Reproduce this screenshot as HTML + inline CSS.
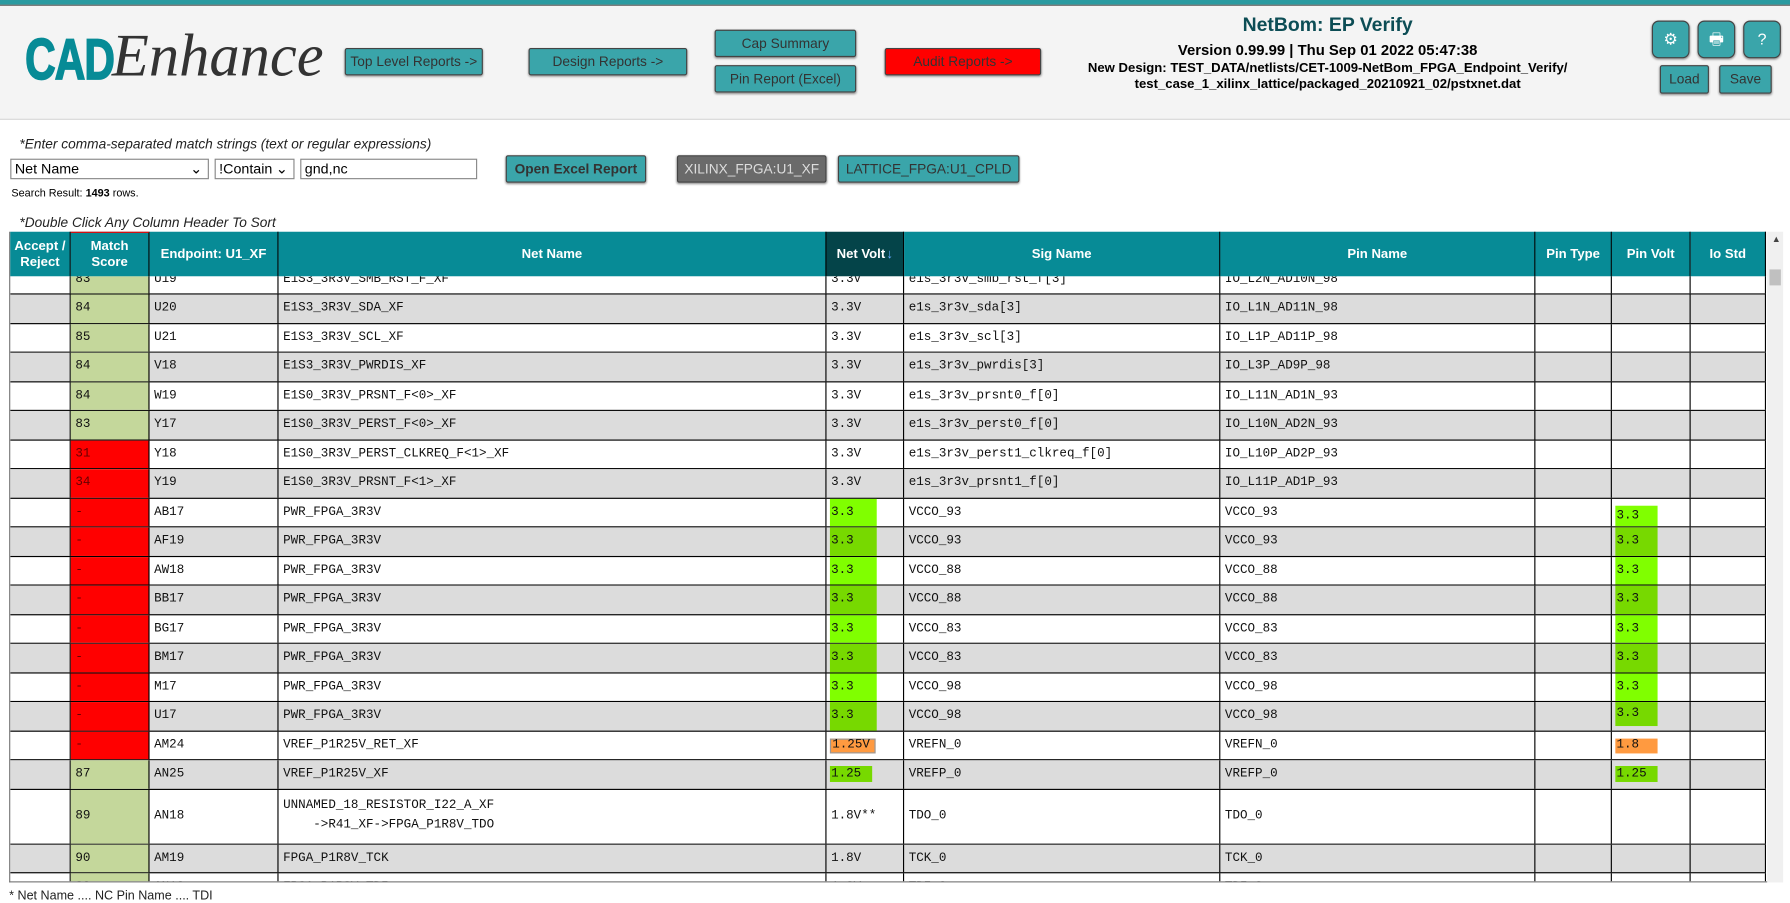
<!DOCTYPE html>
<html><head><meta charset="utf-8"><style>
html,body{margin:0;padding:0;width:1790px;height:893px;overflow:hidden;background:#fff}
#w{position:absolute;left:0;top:0;width:1568px;height:782px;transform:scale(1.14158);transform-origin:0 0;font-family:"Liberation Sans",sans-serif}
.a{position:absolute}
.hdr{left:0;top:0;width:1568px;height:100px;background:#f4f4f4;border-bottom:1px solid #d8d8d8;border-top:4px solid #2a9aa0;box-shadow:inset 0 1px 0 #555}
.btn{position:absolute;background:#3aa5aa;border:1px solid #444;box-shadow:0 1px 2px #888;font-size:12px;color:#333;text-align:center;box-sizing:border-box;border-radius:2px}
.th{position:absolute;top:203px;height:39px;background:#078b96;color:#fff;font-weight:bold;font-size:11.5px;text-align:center;display:flex;align-items:center;justify-content:center;line-height:14px;border-right:1px solid #000;box-sizing:border-box}
.r{position:absolute;left:9px;width:1538px;height:25.5px;border-bottom:1.5px solid #000;box-sizing:border-box;font-family:"Liberation Mono",monospace;font-size:11px;color:#111}
.g{background:#dcdcdc}
.c{position:absolute;top:0;bottom:0;border-right:1px solid #000;box-sizing:border-box;padding-left:4px;display:flex;align-items:center;white-space:nowrap}
.c1{left:0;width:53px}.c2{left:53px;width:69px}.c3{left:122px;width:113px}.c4{left:235px;width:480px}.c5{left:715px;width:68px}.c6{left:783px;width:277px}.c7{left:1060px;width:276px}.c8{left:1336px;width:67px}.c9{left:1403px;width:69px}.c10{left:1472px;width:66px}
.ms{background:#c4d79b}.red{background:#f00;color:#600}
.gv{position:absolute;left:3px;top:0;bottom:0;width:40px;background:#80ff00;padding-left:1px;display:flex;align-items:center}
.g .gv{background:#77d900}
.pv{position:absolute;left:3px;top:0;bottom:0;width:36px;background:#80ff00;padding-left:1px;display:flex;align-items:center}
.g .pv{background:#77d900}
</style></head><body><div id="w">
<div class="a hdr"></div>
<div class="a" style="left:22px;top:25px;font-size:50px;font-weight:900;color:#078b96;letter-spacing:-1px;transform:scaleX(0.74);transform-origin:0 0;line-height:54px;-webkit-text-stroke:1.5px #078b96">CAD</div>
<div class="a" style="left:98px;top:20px;font-family:'Liberation Serif',serif;font-style:italic;font-size:53px;color:#333;line-height:58px">Enhance</div>
<div class="btn" style="left:302px;top:42px;width:121px;height:24px;line-height:22px">Top Level Reports -&gt;</div>
<div class="btn" style="left:463px;top:42px;width:139px;height:24px;line-height:22px">Design Reports -&gt;</div>
<div class="btn" style="left:626px;top:26px;width:124px;height:24px;line-height:22px">Cap Summary</div>
<div class="btn" style="left:626px;top:57px;width:124px;height:24px;line-height:22px">Pin Report (Excel)</div>
<div class="btn" style="left:775px;top:42px;width:137px;height:24px;line-height:22px;background:#f00">Audit Reports -&gt;</div>
<div class="a" style="left:930px;top:12px;width:466px;text-align:center;font-size:17px;font-weight:bold;color:#0c4d55">NetBom: EP Verify</div>
<div class="a" style="left:930px;top:36px;width:466px;text-align:center;font-size:13px;font-weight:bold;color:#000">Version 0.99.99 | Thu Sep 01 2022 05:47:38</div>
<div class="a" style="left:930px;top:53px;width:466px;text-align:center;font-size:11.5px;font-weight:bold;color:#000;line-height:14px">New Design: TEST_DATA/netlists/CET-1009-NetBom_FPGA_Endpoint_Verify/<br>test_case_1_xilinx_lattice/packaged_20210921_02/pstxnet.dat</div>
<div class="btn" style="left:1447px;top:18px;width:33px;height:33px;border-radius:6px;line-height:31px;color:#fff;font-size:14px">⚙</div>
<div class="btn" style="left:1487px;top:18px;width:33px;height:33px;border-radius:6px;line-height:31px;color:#fff;font-size:14px">🖶</div>
<div class="btn" style="left:1527px;top:18px;width:33px;height:33px;border-radius:6px;line-height:31px;color:#fff;font-size:14px">?</div>
<div class="btn" style="left:1454px;top:57px;width:43px;height:25px;line-height:23px">Load</div>
<div class="btn" style="left:1506px;top:57px;width:46px;height:25px;line-height:23px">Save</div>

<div class="a" style="left:17px;top:119px;font-size:12px;font-style:italic;color:#222">*Enter comma-separated match strings (text or regular expressions)</div>
<div class="a" style="left:9px;top:139px;width:174px;height:18px;border:1px solid #888;box-sizing:border-box;background:#fff;font-size:12.5px;padding-left:3px;line-height:16px">Net Name<span style="position:absolute;right:5px">⌄</span></div>
<div class="a" style="left:188px;top:139px;width:70px;height:18px;border:1px solid #888;box-sizing:border-box;background:#fff;font-size:12.5px;padding-left:3px;line-height:16px">!Contain<span style="position:absolute;right:5px">⌄</span></div>
<div class="a" style="left:263px;top:139px;width:155px;height:18px;border:1px solid #888;box-sizing:border-box;background:#fff;font-size:12.5px;padding-left:3px;line-height:16px">gnd,nc</div>
<div class="btn" style="left:443px;top:136px;width:123px;height:24px;line-height:22px;font-weight:bold;font-size:12px">Open Excel Report</div>
<div class="btn" style="left:593px;top:136px;width:131px;height:24px;line-height:22px;background:#6a6a6a;color:#ddd">XILINX_FPGA:U1_XF</div>
<div class="btn" style="left:734px;top:136px;width:159px;height:24px;line-height:22px">LATTICE_FPGA:U1_CPLD</div>
<div class="a" style="left:10px;top:164px;font-size:9.5px;color:#000">Search Result: <b>1493</b> rows.</div>
<div class="a" style="left:17px;top:188px;font-size:12px;font-style:italic;color:#222">*Double Click Any Column Header To Sort</div>

<div class="a" style="left:8px;top:203px;width:1px;height:570px;background:#777"></div>
<div class="a" style="left:9px;top:242px;width:1538px;height:530px;overflow:hidden">
<div style="position:absolute;left:-9px;top:-242px;width:1568px;height:800px">
<div class="r" style="top:232.5px"><div class="c c1"></div><div class="c c2 ms">83</div><div class="c c3">U19</div><div class="c c4">E1S3_3R3V_SMB_RST_F_XF</div><div class="c c5">3.3V</div><div class="c c6">e1s_3r3v_smb_rst_f[3]</div><div class="c c7">IO_L2N_AD10N_98</div><div class="c c8"></div><div class="c c9"></div><div class="c c10"></div></div>
<div class="r g" style="top:258px"><div class="c c1"></div><div class="c c2 ms">84</div><div class="c c3">U20</div><div class="c c4">E1S3_3R3V_SDA_XF</div><div class="c c5">3.3V</div><div class="c c6">e1s_3r3v_sda[3]</div><div class="c c7">IO_L1N_AD11N_98</div><div class="c c8"></div><div class="c c9"></div><div class="c c10"></div></div>
<div class="r" style="top:283.5px"><div class="c c1"></div><div class="c c2 ms">85</div><div class="c c3">U21</div><div class="c c4">E1S3_3R3V_SCL_XF</div><div class="c c5">3.3V</div><div class="c c6">e1s_3r3v_scl[3]</div><div class="c c7">IO_L1P_AD11P_98</div><div class="c c8"></div><div class="c c9"></div><div class="c c10"></div></div>
<div class="r g" style="top:309px"><div class="c c1"></div><div class="c c2 ms">84</div><div class="c c3">V18</div><div class="c c4">E1S3_3R3V_PWRDIS_XF</div><div class="c c5">3.3V</div><div class="c c6">e1s_3r3v_pwrdis[3]</div><div class="c c7">IO_L3P_AD9P_98</div><div class="c c8"></div><div class="c c9"></div><div class="c c10"></div></div>
<div class="r" style="top:334.5px"><div class="c c1"></div><div class="c c2 ms">84</div><div class="c c3">W19</div><div class="c c4">E1S0_3R3V_PRSNT_F&lt;0&gt;_XF</div><div class="c c5">3.3V</div><div class="c c6">e1s_3r3v_prsnt0_f[0]</div><div class="c c7">IO_L11N_AD1N_93</div><div class="c c8"></div><div class="c c9"></div><div class="c c10"></div></div>
<div class="r g" style="top:360px"><div class="c c1"></div><div class="c c2 ms">83</div><div class="c c3">Y17</div><div class="c c4">E1S0_3R3V_PERST_F&lt;0&gt;_XF</div><div class="c c5">3.3V</div><div class="c c6">e1s_3r3v_perst0_f[0]</div><div class="c c7">IO_L10N_AD2N_93</div><div class="c c8"></div><div class="c c9"></div><div class="c c10"></div></div>
<div class="r" style="top:385.5px"><div class="c c1"></div><div class="c c2 red">31</div><div class="c c3">Y18</div><div class="c c4">E1S0_3R3V_PERST_CLKREQ_F&lt;1&gt;_XF</div><div class="c c5">3.3V</div><div class="c c6">e1s_3r3v_perst1_clkreq_f[0]</div><div class="c c7">IO_L10P_AD2P_93</div><div class="c c8"></div><div class="c c9"></div><div class="c c10"></div></div>
<div class="r g" style="top:411px"><div class="c c1"></div><div class="c c2 red">34</div><div class="c c3">Y19</div><div class="c c4">E1S0_3R3V_PRSNT_F&lt;1&gt;_XF</div><div class="c c5">3.3V</div><div class="c c6">e1s_3r3v_prsnt1_f[0]</div><div class="c c7">IO_L11P_AD1P_93</div><div class="c c8"></div><div class="c c9"></div><div class="c c10"></div></div>
<div class="r" style="top:436.5px"><div class="c c1"></div><div class="c c2 red">-</div><div class="c c3">AB17</div><div class="c c4">PWR_FPGA_3R3V</div><div class="c c5"><span class="gv">3.3</span></div><div class="c c6">VCCO_93</div><div class="c c7">VCCO_93</div><div class="c c8"></div><div class="c c9"><span class="pv" style="top:6px">3.3</span></div><div class="c c10"></div></div>
<div class="r g" style="top:462px"><div class="c c1"></div><div class="c c2 red">-</div><div class="c c3">AF19</div><div class="c c4">PWR_FPGA_3R3V</div><div class="c c5"><span class="gv">3.3</span></div><div class="c c6">VCCO_93</div><div class="c c7">VCCO_93</div><div class="c c8"></div><div class="c c9"><span class="pv">3.3</span></div><div class="c c10"></div></div>
<div class="r" style="top:487.5px"><div class="c c1"></div><div class="c c2 red">-</div><div class="c c3">AW18</div><div class="c c4">PWR_FPGA_3R3V</div><div class="c c5"><span class="gv">3.3</span></div><div class="c c6">VCCO_88</div><div class="c c7">VCCO_88</div><div class="c c8"></div><div class="c c9"><span class="pv">3.3</span></div><div class="c c10"></div></div>
<div class="r g" style="top:513px"><div class="c c1"></div><div class="c c2 red">-</div><div class="c c3">BB17</div><div class="c c4">PWR_FPGA_3R3V</div><div class="c c5"><span class="gv">3.3</span></div><div class="c c6">VCCO_88</div><div class="c c7">VCCO_88</div><div class="c c8"></div><div class="c c9"><span class="pv">3.3</span></div><div class="c c10"></div></div>
<div class="r" style="top:538.5px"><div class="c c1"></div><div class="c c2 red">-</div><div class="c c3">BG17</div><div class="c c4">PWR_FPGA_3R3V</div><div class="c c5"><span class="gv">3.3</span></div><div class="c c6">VCCO_83</div><div class="c c7">VCCO_83</div><div class="c c8"></div><div class="c c9"><span class="pv">3.3</span></div><div class="c c10"></div></div>
<div class="r g" style="top:564px"><div class="c c1"></div><div class="c c2 red">-</div><div class="c c3">BM17</div><div class="c c4">PWR_FPGA_3R3V</div><div class="c c5"><span class="gv">3.3</span></div><div class="c c6">VCCO_83</div><div class="c c7">VCCO_83</div><div class="c c8"></div><div class="c c9"><span class="pv">3.3</span></div><div class="c c10"></div></div>
<div class="r" style="top:589.5px"><div class="c c1"></div><div class="c c2 red">-</div><div class="c c3">M17</div><div class="c c4">PWR_FPGA_3R3V</div><div class="c c5"><span class="gv">3.3</span></div><div class="c c6">VCCO_98</div><div class="c c7">VCCO_98</div><div class="c c8"></div><div class="c c9"><span class="pv">3.3</span></div><div class="c c10"></div></div>
<div class="r g" style="top:615px"><div class="c c1"></div><div class="c c2 red">-</div><div class="c c3">U17</div><div class="c c4">PWR_FPGA_3R3V</div><div class="c c5"><span class="gv">3.3</span></div><div class="c c6">VCCO_98</div><div class="c c7">VCCO_98</div><div class="c c8"></div><div class="c c9"><span class="pv" style="bottom:4px">3.3</span></div><div class="c c10"></div></div>
<div class="r" style="top:640.5px"><div class="c c1"></div><div class="c c2 red">-</div><div class="c c3">AM24</div><div class="c c4">VREF_P1R25V_RET_XF</div><div class="c c5"><span class="gv" style="background:#ff9a40;top:6px;bottom:5px;border:1px solid #999;box-sizing:border-box">1.25V</span></div><div class="c c6">VREFN_0</div><div class="c c7">VREFN_0</div><div class="c c8"></div><div class="c c9"><span class="pv" style="background:#ff9a40;top:6px;bottom:5px">1.8</span></div><div class="c c10"></div></div>
<div class="r g" style="top:666px"><div class="c c1"></div><div class="c c2 ms">87</div><div class="c c3">AN25</div><div class="c c4">VREF_P1R25V_XF</div><div class="c c5"><span class="gv" style="top:5px;bottom:6px;width:36px">1.25</span></div><div class="c c6">VREFP_0</div><div class="c c7">VREFP_0</div><div class="c c8"></div><div class="c c9"><span class="pv" style="top:5px;bottom:6px">1.25</span></div><div class="c c10"></div></div>
<div class="r" style="top:691.5px;height:48px"><div class="c c1"></div><div class="c c2 ms">89</div><div class="c c3">AN18</div><div class="c c4" style="line-height:17px">UNNAMED_18_RESISTOR_I22_A_XF<br>&nbsp;&nbsp;&nbsp;&nbsp;-&gt;R41_XF-&gt;FPGA_P1R8V_TDO</div><div class="c c5">1.8V**</div><div class="c c6">TDO_0</div><div class="c c7">TDO_0</div><div class="c c8"></div><div class="c c9"></div><div class="c c10"></div></div>
<div class="r g" style="top:739.5px"><div class="c c1"></div><div class="c c2 ms">90</div><div class="c c3">AM19</div><div class="c c4">FPGA_P1R8V_TCK</div><div class="c c5">1.8V</div><div class="c c6">TCK_0</div><div class="c c7">TCK_0</div><div class="c c8"></div><div class="c c9"></div><div class="c c10"></div></div>
<div class="r" style="top:765px"><div class="c c1"></div><div class="c c2 ms" style="align-items:flex-start;padding-top:6px">89</div><div class="c c3" style="align-items:flex-start;padding-top:6px">AN19</div><div class="c c4" style="align-items:flex-start;padding-top:6px">FPGA_P1R8V_TDI</div><div class="c c5" style="align-items:flex-start;padding-top:6px">1.8V</div><div class="c c6" style="align-items:flex-start;padding-top:6px">TDI_0</div><div class="c c7" style="align-items:flex-start;padding-top:6px">TDI_0</div><div class="c c8"></div><div class="c c9"></div><div class="c c10"></div></div>
</div></div>

<div class="th" style="left:9px;width:53px">Accept /<br>Reject</div>
<div class="th" style="left:62px;width:69px;border-top:1px solid #e00">Match<br>Score</div>
<div class="th" style="left:131px;width:113px">Endpoint: U1_XF</div>
<div class="th" style="left:244px;width:480px">Net Name</div>
<div class="th" style="left:724px;width:68px;background:#044449">Net Volt<span style="color:#6af;margin-left:1px">↓</span></div>
<div class="th" style="left:792px;width:277px">Sig Name</div>
<div class="th" style="left:1069px;width:276px">Pin Name</div>
<div class="th" style="left:1345px;width:67px">Pin Type</div>
<div class="th" style="left:1412px;width:69px">Pin Volt</div>
<div class="th" style="left:1481px;width:66px">Io Std</div>
<div class="a" style="left:1548px;top:203px;width:14px;height:570px;background:#f0f0f0"></div>
<div class="a" style="left:1552px;top:205px;font-size:8px;color:#444">▲</div>
<div class="a" style="left:1550px;top:236px;width:10px;height:14px;background:#c0c0c0"></div>
<div class="a" style="left:8px;top:772px;width:1540px;height:1px;background:#777"></div>
<div class="a" style="left:8px;top:779px;font-size:11px;color:#222">* Net Name .... NC  Pin Name .... TDI</div>
</div></body></html>
